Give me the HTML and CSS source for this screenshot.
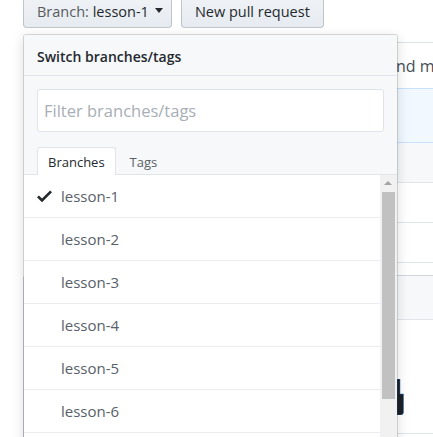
FILE: index.html
```html
<!DOCTYPE html>
<html lang="en">
<head>
<meta charset="utf-8">
<title>Switch branches</title>
<link rel="stylesheet" href="styles.css">
</head>
<body>
<div class="page">
  <div class="toolbar">
    <button class="btn btn-branch"><span class="btn-label"><i>Branch:</i> <span class="target">lesson-1</span></span><span class="caret"></span></button>
    <button class="btn"><span class="btn-label">New pull request</span></button>
  </div>

  <div class="repo-box">
    <div class="box-header"><span class="desc">nd more</span></div>
    <div class="box-blue"></div>
    <div class="box-gray"></div>
    <div class="box-row"></div>
    <div class="box-row"></div>
    <div class="box-row short"></div>
  </div>
  <div class="file-list">
    <div class="file-head"></div>
    <div class="file-row big"><svg class="glyph" viewBox="0 0 7 36" width="7" height="36"><path d="M0 0h3v15h3.5v18q0 3-3 3H0z"/></svg></div>
    <div class="file-row"></div>
  </div>

  <div class="select-menu">
    <div class="menu-header">Switch branches/tags</div>
    <div class="menu-filter">
      <input class="filter-input" type="text" placeholder="Filter branches/tags">
      <nav class="menu-tabs">
        <span class="tab selected">Branches</span>
        <span class="tab">Tags</span>
      </nav>
    </div>
    <div class="menu-body">
      <ul class="menu-list">
        <li class="item"><svg class="check" viewBox="0 0 12 16" width="15" height="20"><path d="M12 5l-8 8-4-4 1.5-1.5L4 10l6.5-6.5L12 5z"/></svg><span>lesson-1</span></li>
        <li class="item"><span class="nocheck"></span><span>lesson-2</span></li>
        <li class="item"><span class="nocheck"></span><span>lesson-3</span></li>
        <li class="item"><span class="nocheck"></span><span>lesson-4</span></li>
        <li class="item"><span class="nocheck"></span><span>lesson-5</span></li>
        <li class="item"><span class="nocheck"></span><span>lesson-6</span></li>
        <li class="item"><span class="nocheck"></span><span>lesson-7</span></li>
      </ul>
      <div class="scrollbar">
        <div class="sb-arrow"></div>
        <div class="sb-thumb"></div>
      </div>
    </div>
  </div>
</div>
</body>
</html>
```

FILE: styles.css
```css
* { box-sizing: border-box; }
html, body { margin: 0; padding: 0; background: #fff; }
body {
  font-family: "Open Sans", "Noto Sans", "Liberation Sans", sans-serif;
  color: #24292e;
  overflow: hidden;
  width: 433px;
  height: 437px;
}
.page { position: relative; height: 437px; overflow: hidden; }

.toolbar {
  display: flex;
  gap: 9px;
  padding-left: 23px;
  margin-top: -6px;
}
.btn {
  display: flex;
  align-items: center;
  height: 34px;
  padding: 0 13px;
  font-family: inherit;
  font-size: 14.5px;
  font-weight: 400;
  color: #24292e;
  background: linear-gradient(#f0f3f6, #e6ebf1);
  border: 1px solid rgba(27,31,35,0.2);
  border-radius: 4px;
  white-space: nowrap;
}
.btn-branch { padding-right: 8px; }
.btn i { font-style: normal; opacity: 0.75; }
.caret {
  display: inline-block;
  width: 0; height: 0;
  margin-left: 6px;
  border-left: 4px solid transparent;
  border-right: 4px solid transparent;
  border-top: 5px solid #24292e;
  transform: translateY(-1px);
}

/* page content under the menu */
.repo-box {
  margin-left: 360px;
  margin-top: 14px;
  width: 200px;
  border-top: 1px solid #dfe2e5;
}
.box-header { height: 45px; display: flex; align-items: center; padding-left: 36px; }
.desc { font-size: 16px; color: #444d56; white-space: nowrap; }
.box-blue { height: 55px; background: #f1f8ff; border-top: 1px solid #c8e1ff; border-bottom: 1px solid #c8e1ff; }
.box-gray { height: 40px; background: #f6f8fa; border-bottom: 1px solid #e1e4e8; }
.box-row { height: 40px; border-bottom: 1px solid #e1e4e8; }
.box-row.short { height: 12px; border-bottom: 0; }

.file-list {
  margin-left: 23px;
  width: 560px;
  border: 1px solid #d1d5da;
  border-radius: 3px 3px 0 0;
}
.file-head { height: 44px; background: #f6f8fa; border-bottom: 1px solid #e1e4e8; }
.file-row { height: 40px; border-bottom: 1px solid #e1e4e8; position: relative; }
.file-row.big { height: 114px; }
.glyph {
  position: absolute;
  left: 373px; top: 59px;
  fill: #1b1f23;
  stroke: #2f6fc0;
  stroke-width: 0.5;
}

.select-menu {
  position: absolute;
  left: 23px;
  top: 34px;
  width: 375px;
  height: 440px;
  background: #fff;
  background-clip: padding-box;
  border: 1px solid rgba(27,31,35,0.15);
  border-bottom: 0;
  border-radius: 3px 3px 0 0;
  box-shadow: 0 3px 12px rgba(27,31,35,0.15);
  z-index: 10;
}
.menu-header {
  height: 41px;
  padding: 2px 13px 0;
  display: flex;
  align-items: center;
  font-size: 14px;
  font-weight: 600;
  background: #f6f8fa;
  border-bottom: 1px solid #e1e4e8;
  border-radius: 3px 3px 0 0;
}
.menu-filter {
  background: #f6f8fa;
  padding: 13px 13px 0;
  border-bottom: 1px solid #e1e4e8;
}
.filter-input {
  display: block;
  width: 100%;
  height: 43px;
  padding: 0 6px;
  font-family: inherit;
  font-size: 16.5px;
  color: #24292e;
  background: #fff;
  border: 1px solid #e1e4e8;
  border-radius: 3px;
  outline: none;
}
.filter-input::placeholder { color: #a8aeb5; }
.menu-tabs {
  display: flex;
  gap: 3px;
  margin-top: 15px;
  margin-bottom: -1px;
}
.tab {
  height: 28px;
  display: flex;
  align-items: center;
  padding: 0 10px;
  font-size: 13px;
  color: #586069;
  border: 1px solid transparent;
  border-bottom: 0;
  border-radius: 3px 3px 0 0;
}
.tab.selected { background: #fff; color: #24292e; border-color: #e1e4e8; }

.menu-body { display: flex; }
.menu-list { flex: 1; list-style: none; margin: 0; padding: 0; }
.item {
  height: 43px;
  display: flex;
  align-items: center;
  gap: 9px;
  padding-left: 13px;
  font-size: 15px;
  color: #586069;
  border-bottom: 1px solid #eaecef;
}
.check { fill: #24292e; flex: none; }
.nocheck { width: 15px; flex: none; }

.scrollbar {
  width: 17px;
  flex: none;
  background: #f1f1f1;
  display: flex;
  flex-direction: column;
  align-items: center;
}
.sb-arrow {
  height: 17px;
  width: 17px;
  position: relative;
}
.sb-arrow::after {
  content: "";
  position: absolute;
  left: 4px; top: 6px;
  border-left: 4px solid transparent;
  border-right: 4px solid transparent;
  border-bottom: 4px solid #a3a3a3;
}
.sb-thumb {
  width: 13px;
  height: 207px;
  background: #c1c1c1;
}
```
